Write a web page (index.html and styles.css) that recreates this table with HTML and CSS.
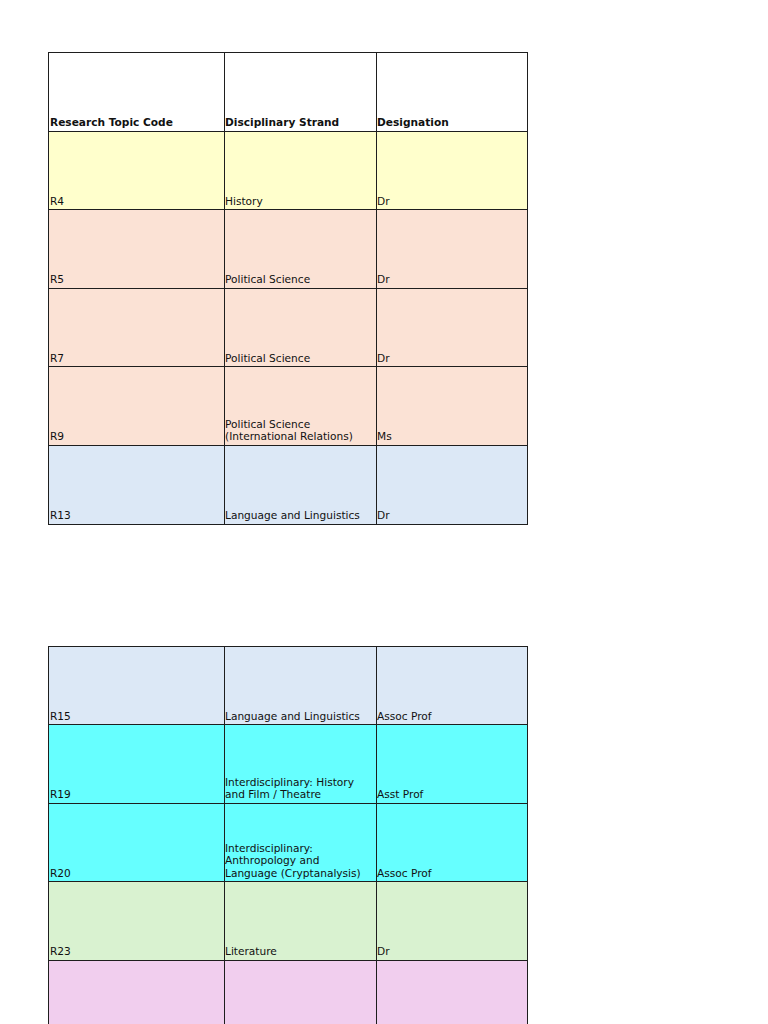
FILE: index.html
```html
<!DOCTYPE html>
<html>
<head>
<meta charset="utf-8">
<link rel="stylesheet" href="styles.css">
</head>
<body>
<div class="page">
<table class="sheet">
  <colgroup><col class="c1"><col class="c2"><col class="c3"></colgroup>
  <tr class="head"><td>Research Topic Code</td><td>Disciplinary Strand</td><td>Designation</td></tr>
  <tr class="yellow"><td>R4</td><td>History</td><td>Dr</td></tr>
  <tr class="peach"><td>R5</td><td>Political Science</td><td>Dr</td></tr>
  <tr class="peach"><td>R7</td><td>Political Science</td><td>Dr</td></tr>
  <tr class="peach"><td>R9</td><td>Political Science<br>(International Relations)</td><td>Ms</td></tr>
  <tr class="blue"><td>R13</td><td>Language and Linguistics</td><td>Dr</td></tr>
</table>
<table class="sheet second">
  <colgroup><col class="c1"><col class="c2"><col class="c3"></colgroup>
  <tr class="blue"><td>R15</td><td>Language and Linguistics</td><td>Assoc Prof</td></tr>
  <tr class="cyan"><td>R19</td><td>Interdisciplinary: History<br>and Film / Theatre</td><td>Asst Prof</td></tr>
  <tr class="cyan"><td>R20</td><td>Interdisciplinary:<br>Anthropology and<br>Language (Cryptanalysis)</td><td>Assoc Prof</td></tr>
  <tr class="green"><td>R23</td><td>Literature</td><td>Dr</td></tr>
  <tr class="pink"><td></td><td></td><td></td></tr>
</table>
</div>
</body>
</html>
```
FILE: styles.css
```css
html, body {
  margin: 0;
  padding: 0;
  background: #ffffff;
}
.page {
  padding: 52px 0 0 48px;
  height: 972px;
  overflow: hidden;
}
.sheet {
  border-collapse: collapse;
  table-layout: fixed;
  width: 479px;
  font-family: "DejaVu Sans", sans-serif;
  font-size: 10.6px;
  line-height: 12.5px;
  color: #111;
}
.sheet.second {
  margin-top: 121px;
}
.c1 { width: 176px; }
.c2 { width: 152px; }
.c3 { width: 151px; }
.sheet tr { height: 78.6px; }
.sheet td {
  border: 1px solid #1e1e1e;
  vertical-align: bottom;
  padding: 0 0 2px 1px;
  white-space: nowrap;
}
.sheet td + td { padding-left: 0; }
.head td { font-weight: bold; background: #ffffff; }
.yellow td { background: #ffffcc; }
.peach td { background: #fbe2d5; }
.blue td { background: #dce8f6; }
.cyan td { background: #66ffff; }
.green td { background: #d9f2d0; }
.pink td { background: #f1ceee; }
```
